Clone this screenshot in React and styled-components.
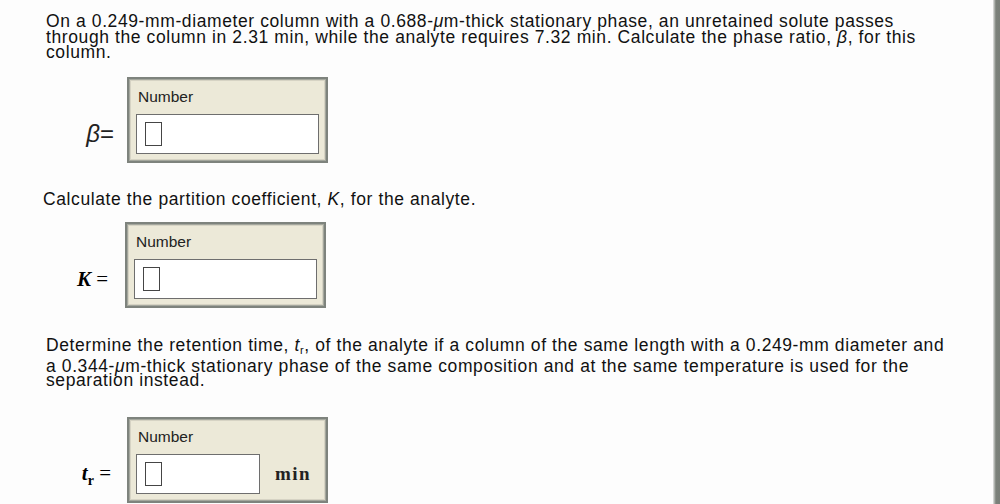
import React from 'react';
import styled, { createGlobalStyle } from 'styled-components';

const GlobalStyle = createGlobalStyle`
  html, body {
    margin: 0;
    padding: 0;
    background: #fdfdfd;
  }
`;

const Page = styled.div`
  display: flex;
  height: 504px;
  width: 1000px;
  overflow: hidden;
  background: #fdfdfd;
`;

const Content = styled.div`
  flex: 1;
  display: flex;
  flex-direction: column;
  align-items: flex-start;
  padding: 14px 0 0 46px;
  font-family: 'Liberation Sans', Arial, sans-serif;
  color: #111;
`;

const Edge = styled.div`
  width: 7px;
  flex: none;
  background: linear-gradient(
    to right,
    #e4e4e4 0,
    #c2c4c1 1px,
    #9a9e98 2px,
    #7c817b 3px,
    #7a7f79 100%
  );
`;

const Paragraph = styled.div`
  font-size: 17.5px;
  letter-spacing: 0.6px;
  line-height: 15.5px;
  margin-top: ${(p) => p.$top || 0}px;
  margin-left: ${(p) => p.$shift || 0}px;
  white-space: nowrap;
`;

const Line = styled.span`
  display: block;
  margin-top: ${(p) => p.$gap || 0}px;
`;

const Sub = styled.sub`
  font-size: 11px;
  line-height: 0;
  vertical-align: -3px;
`;

const Row = styled.div`
  display: flex;
  align-items: flex-end;
  margin-top: ${(p) => p.$top}px;
  margin-left: ${(p) => p.$shift || 0}px;
`;

const Label = styled.div`
  width: 69px;
  height: 40px;
  margin: 0 12px 9px 0;
  display: flex;
  align-items: center;
  justify-content: flex-end;
  padding-right: ${(p) => p.$pad || 0}px;
  box-sizing: border-box;
  white-space: nowrap;
`;

const SansSymbol = styled.span`
  font-family: 'Liberation Sans', Arial, sans-serif;
  font-size: 24px;
  color: #222;
`;

const SerifSymbol = styled.span`
  font-family: 'Liberation Serif', 'Times New Roman', serif;
  font-size: 21px;
  color: #000;
`;

const SerifSub = styled.sub`
  font-size: 14px;
  font-weight: bold;
  line-height: 0;
  vertical-align: -5px;
`;

const Box = styled.div`
  width: 201px;
  box-sizing: border-box;
  background: #ece9d8;
  border: 2px solid #7e837d;
  box-shadow: inset 0 0 0 1px #a4a79d, inset 0 0 0 2px #d6d3c4;
  padding: 10px 7px 7px;
`;

const BoxTitle = styled.div`
  font-size: 15.5px;
  line-height: 16px;
  color: #222;
  margin: 0 0 9px 2px;
`;

const Field = styled.div`
  display: flex;
  align-items: center;
`;

const Input = styled.div`
  width: ${(p) => p.$width}px;
  height: 40px;
  box-sizing: border-box;
  background: #fff;
  border: 1px solid #6e6e6e;
  padding: 7px 8px;
`;

const Caret = styled.div`
  width: 17px;
  height: 24px;
  box-sizing: border-box;
  border: 1px solid #454545;
  background: #fff;
`;

const Unit = styled.span`
  margin-left: 15px;
  font-family: 'Liberation Serif', 'Times New Roman', serif;
  font-weight: bold;
  font-size: 19px;
  letter-spacing: 1.5px;
  color: #222;
`;

function AnswerBox({ width = 183, unit }) {
  return (
    <Box>
      <BoxTitle>Number</BoxTitle>
      <Field>
        <Input $width={width}>
          <Caret />
        </Input>
        {unit && <Unit>{unit}</Unit>}
      </Field>
    </Box>
  );
}

export default function App() {
  return (
    <Page>
      <GlobalStyle />
      <Content>
        <Paragraph>
          <Line>
            On a 0.249-mm-diameter column with a 0.688-<i>μ</i>m-thick stationary phase, an unretained solute passes
          </Line>
          <Line>
            through the column in 2.31 min, while the analyte requires 7.32 min. Calculate the phase ratio, <i>β</i>, for this
          </Line>
          <Line>column.</Line>
        </Paragraph>

        <Row $top={16}>
          <Label $pad={1}>
            <SansSymbol>
              <i>β</i>=
            </SansSymbol>
          </Label>
          <AnswerBox />
        </Row>

        <Paragraph $top={29} $shift={-3}>
          <Line>
            Calculate the partition coefficient, <i>K</i>, for the analyte.
          </Line>
        </Paragraph>

        <Row $top={15} $shift={-2}>
          <Label $pad={5}>
            <SerifSymbol>
              <b>
                <i>K</i>
              </b>
              {' '}=
            </SerifSymbol>
          </Label>
          <AnswerBox />
        </Row>

        <Paragraph $top={30}>
          <Line>
            Determine the retention time, <i>t</i>
            <Sub>r</Sub>, of the analyte if a column of the same length with a 0.249-mm diameter and
          </Line>
          <Line $gap={5}>
            a 0.344-<i>μ</i>m-thick stationary phase of the same composition and at the same temperature is used for the
          </Line>
          <Line $gap={-1}>separation instead.</Line>
        </Paragraph>

        <Row $top={28}>
          <Label $pad={4}>
            <SerifSymbol>
              <b>
                <i>t</i>
              </b>
              <SerifSub>r</SerifSub> =
            </SerifSymbol>
          </Label>
          <AnswerBox width={124} unit="min" />
        </Row>
      </Content>
      <Edge />
    </Page>
  );
}
